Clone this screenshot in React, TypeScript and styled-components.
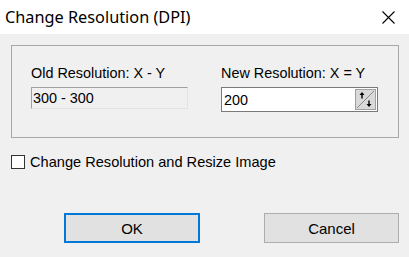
import React from 'react';
import styled, {createGlobalStyle} from 'styled-components';

const GlobalStyle = createGlobalStyle`
    html, body {
        margin: 0;
        padding: 0;
        background: #f0f0f0;
    }
    body {
        font-family: "Liberation Sans", Arial, sans-serif;
        font-size: 14.4px;
        color: #000;
    }
`

const Window = styled.div`
    width: 409px;
    height: 257px;
    display: flex;
    flex-direction: column;
    background: #f0f0f0;
    overflow: hidden;
`
const TitleBar = styled.div`
    height: 34px;
    flex: none;
    background: #fff;
    display: flex;
    align-items: center;
    justify-content: space-between;
    padding: 0 14px 0 5px;
`
const TitleText = styled.div`
    font-family: "Noto Sans", "Open Sans", sans-serif;
    font-size: 16.3px;
    color: #000;
`
const Body = styled.div`
    display: flex;
    flex-direction: column;
    padding: 11px 10px 0 11px;
`
const GroupBox = styled.div`
    height: 93px;
    box-sizing: border-box;
    border: 1px solid #a8a8a8;
    display: grid;
    grid-template-columns: 157px 157px;
    column-gap: 33px;
    align-content: start;
    padding: 19px 0 0 19px;
`
const Field = styled.div`
    display: flex;
    flex-direction: column;
`
const Label = styled.div`
    line-height: 16px;
    height: 22px;
`
const StaticValue = styled.div`
    height: 22px;
    box-sizing: border-box;
    border-top: 1px solid #a0a0a0;
    border-left: 1px solid #a0a0a0;
    border-right: 1px solid #e3e3e3;
    border-bottom: 1px solid #e3e3e3;
    padding: 2px 0 0 1px;
    line-height: 16px;
`
const Input = styled.div`
    height: 25px;
    box-sizing: border-box;
    border: 1px solid #7a7a7a;
    background: #fff;
    display: flex;
    align-items: center;
    justify-content: space-between;
    padding: 0 1px 0 2px;
`
const Spin = styled.div`
    width: 21px;
    height: 21px;
    box-sizing: border-box;
    border: 1px solid #a0a0a0;
    background: #d9d9d9;
`
const CheckRow = styled.label`
    display: flex;
    align-items: center;
    gap: 5px;
    margin-top: 16px;
    height: 16px;
    font-size: 14.6px;
`
const Check = styled.span`
    width: 14px;
    height: 14px;
    box-sizing: border-box;
    border: 1px solid #333;
    background: #fff;
`
const ButtonRow = styled.div`
    display: flex;
    justify-content: space-between;
    padding-left: 53px;
    margin-top: 43px;
`
const Button = styled.button<{primary?: boolean}>`
    width: ${p => p.primary ? 136 : 135}px;
    height: 30px;
    box-sizing: border-box;
    background: #e1e1e1;
    border: ${p => p.primary ? '2px solid #0078d7' : '1px solid #adadad'};
    font-family: "Liberation Sans", Arial, sans-serif;
    font-size: 15px;
    color: #000;
    padding: 0;
`

const CloseIcon = () => (
    <svg width="13" height="13" viewBox="0 0 13 13">
        <path d="M0.5 0.5 L12.5 12.5 M12.5 0.5 L0.5 12.5" stroke="#000" strokeWidth="1.1"/>
    </svg>
)

const SpinIcon = () => (
    <Spin>
        <svg width="19" height="19" viewBox="0 0 19 19">
            <path d="M1 18 L18 1" stroke="#8a8a8a" strokeWidth="1"/>
            <path d="M6 2 L3.5 5 H5.3 V8.5 H6.7 V5 H8.5 Z" fill="#000"/>
            <path d="M13 17 L10.5 14 H12.3 V10.5 H13.7 V14 H15.5 Z" fill="#000"/>
        </svg>
    </Spin>
)

export default function App() {
    return (
        <Window>
            <GlobalStyle/>
            <TitleBar>
                <TitleText>Change Resolution (DPI)</TitleText>
                <CloseIcon/>
            </TitleBar>
            <Body>
                <GroupBox>
                    <Field>
                        <Label>Old Resolution: X - Y</Label>
                        <StaticValue>300 - 300</StaticValue>
                    </Field>
                    <Field>
                        <Label>New Resolution: X = Y</Label>
                        <Input>
                            <span>200</span>
                            <SpinIcon/>
                        </Input>
                    </Field>
                </GroupBox>
                <CheckRow>
                    <Check/>
                    <span>Change Resolution and Resize Image</span>
                </CheckRow>
                <ButtonRow>
                    <Button primary>OK</Button>
                    <Button>Cancel</Button>
                </ButtonRow>
            </Body>
        </Window>
    )
}
